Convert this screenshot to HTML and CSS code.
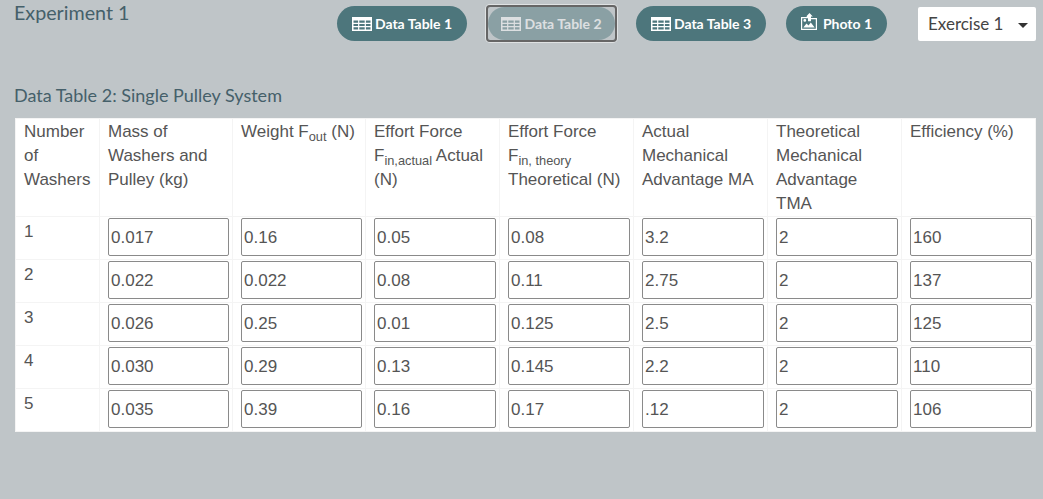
FILE: index.html
```html
<!DOCTYPE html>
<html lang="en">
<head>
<meta charset="utf-8">
<title>Experiment 1</title>
<link rel="stylesheet" href="styles.css">
</head>
<body>
<svg class="defs" width="0" height="0" aria-hidden="true">
  <symbol id="tbl" viewBox="0 0 20 14">
    <path fill="currentColor" fill-rule="evenodd" d="M0 0h20v14H0zM1.500 3.500v2.200h4.600V3.500zM7.300 3.500v2.200h5.400V3.500zM13.900 3.500v2.200h4.600V3.500zM1.500 6.900v2.200h4.600V6.900zM7.300 6.900v2.200h5.400V6.900zM13.900 6.900v2.200h4.600V6.900zM1.500 10.300v2.200h4.600v-2.200zM7.300 10.300v2.200h5.400v-2.200zM13.900 10.300v2.200h4.600v-2.200z"/>
  </symbol>
  <symbol id="photo" viewBox="0 0 16 17">
    <path fill="currentColor" fill-rule="evenodd" d="M8.500 0l3.300 3.400H10V5h6v12H0V4h6V3.400H5.200zM1.200 5.200v10.600h13.600V6.200H10v2H7V5.200zM2.300 14.600l3.200-4.200 2 2 2.300-3 3.900 5.200zM3.800 6a1.400 1.400 0 1 1 0 2.800 1.400 1.400 0 0 1 0-2.800z"/>
  </symbol>
</svg>
<header class="topbar">
  <h1 class="title">Experiment 1</h1>
  <nav class="tabs">
    <button class="tab"><svg class="ico-t"><use href="#tbl"/></svg>Data Table 1</button>
    <button class="tab-active"><span class="tab"><svg class="ico-t"><use href="#tbl"/></svg>Data Table 2</span></button>
    <button class="tab"><svg class="ico-t"><use href="#tbl"/></svg>Data Table 3</button>
    <button class="tab tab-photo"><svg class="ico-p"><use href="#photo"/></svg>Photo 1</button>
  </nav>
  <div class="select"><span>Exercise 1</span><i class="caret"></i></div>
</header>
<h2 class="subtitle">Data Table 2: Single Pulley System</h2>
<table class="data">
  <colgroup>
    <col class="c0"><col class="c1"><col class="c2"><col class="c3"><col class="c3"><col class="c3"><col class="c3"><col class="c3">
  </colgroup>
  <thead>
    <tr>
      <th>Number of Washers</th>
      <th>Mass of Washers and Pulley (kg)</th>
      <th><span class="nw">Weight F<sub>out</sub> (N)</span></th>
      <th>Effort Force <span class="nw">F<sub>in,actual</sub></span> Actual (N)</th>
      <th>Effort Force <span class="nw">F<sub>in, theory</sub></span> Theoretical (N)</th>
      <th>Actual Mechanical Advantage MA</th>
      <th>Theoretical Mechanical Advantage TMA</th>
      <th>Efficiency (%)</th>
    </tr>
  </thead>
  <tbody>
    <tr><td class="num">1</td><td><input value="0.017"></td><td><input value="0.16"></td><td><input value="0.05"></td><td><input value="0.08"></td><td><input value="3.2"></td><td><input value="2"></td><td><input value="160"></td></tr>
    <tr><td class="num">2</td><td><input value="0.022"></td><td><input value="0.022"></td><td><input value="0.08"></td><td><input value="0.11"></td><td><input value="2.75"></td><td><input value="2"></td><td><input value="137"></td></tr>
    <tr><td class="num">3</td><td><input value="0.026"></td><td><input value="0.25"></td><td><input value="0.01"></td><td><input value="0.125"></td><td><input value="2.5"></td><td><input value="2"></td><td><input value="125"></td></tr>
    <tr><td class="num">4</td><td><input value="0.030"></td><td><input value="0.29"></td><td><input value="0.13"></td><td><input value="0.145"></td><td><input value="2.2"></td><td><input value="2"></td><td><input value="110"></td></tr>
    <tr><td class="num">5</td><td><input value="0.035"></td><td><input value="0.39"></td><td><input value="0.16"></td><td><input value="0.17"></td><td><input value=".12"></td><td><input value="2"></td><td><input value="106"></td></tr>
  </tbody>
</table>
</body>
</html>
```
FILE: styles.css
```css
* { box-sizing: border-box; }
html, body { margin: 0; height: 100%; }
body {
  background: #bfc5c8;
  font-family: "Lato", "Liberation Sans", sans-serif;
  overflow: hidden;
}
.defs { display: block; height: 0; }
.topbar {
  display: flex;
  align-items: flex-start;
  padding: 6px 7px 0 14px;
  height: 84px;
}
.title {
  margin: 0;
  font-size: 19.7px;
  font-weight: 400;
  line-height: 14px;
  color: #45606a;
  width: 323px;
}
.tabs { display: flex; gap: 19px; width: 581px; }
.tab {
  width: 130px;
  height: 35px;
  border: 0;
  border-radius: 18px;
  background: #4d767c;
  color: #fff;
  font-family: "Lato", sans-serif;
  font-size: 14px;
  font-weight: 700;
  display: flex;
  align-items: center;
  justify-content: center;
  gap: 3px;
  padding: 0;
}
.tab-active {
  width: 131px;
  height: 37px;
  margin: -1px 0;
  padding: 0;
  background: transparent;
  border: 2px solid #666;
  border-radius: 4px;
  box-shadow: 0 0 0 1px #dfe2e3;
}
.tab-active .tab {
  width: 100%;
  height: 100%;
  opacity: .46;
}
.tab-photo { width: 101px; gap: 6px; margin-left: 1px; }
.ico-t { width: 20px; height: 14px; }
.ico-p { width: 16px; height: 17px; margin-top: -4px; }
.select {
  width: 118px;
  height: 34px;
  margin-top: 1px;
  background: #fff;
  border-radius: 2px;
  display: flex;
  align-items: center;
  justify-content: space-between;
  padding: 0 8px 2px 10px;
  color: #444;
  font-size: 17px;
}
.caret {
  width: 0;
  height: 0;
  border-left: 5.5px solid transparent;
  border-right: 5.5px solid transparent;
  border-top: 5px solid #333;
  margin-top: 5px;
}
.subtitle {
  margin: 0 0 12px 14px;
  font-size: 18px;
  line-height: 22px;
  font-weight: 400;
  color: #45606a;
  height: 22px;
}
.data {
  margin-left: 15px;
  width: 1021px;
  table-layout: fixed;
  border-collapse: collapse;
  background: #fff;
  font-family: "Liberation Sans", Arial, sans-serif;
  font-size: 17px;
  line-height: 24px;
  color: #555;
}
.c0 { width: 84px; }
.c1, .c2 { width: 133px; }
.c3 { width: 134px; }
th, td {
  border: 1px solid #f4f4f4;
  padding: 0 8px;
  text-align: left;
  vertical-align: top;
  font-weight: 400;
}
th { padding-top: 1px; padding-bottom: 0; }
td { height: 43px; padding-top: 1px; padding-right: 3px; }
td.num { padding-top: 3px; }
td input {
  display: block;
  width: 100%;
  height: 38px;
  margin: 0;
  border: 1px solid #8a8a8a;
  border-radius: 2px;
  padding: 4px 2px 2px;
  font: 17px "Liberation Sans", Arial, sans-serif;
  color: #555;
  background: #fff;
}
sub { font-size: 12.8px; line-height: 0; }
.nw { white-space: nowrap; }
```
